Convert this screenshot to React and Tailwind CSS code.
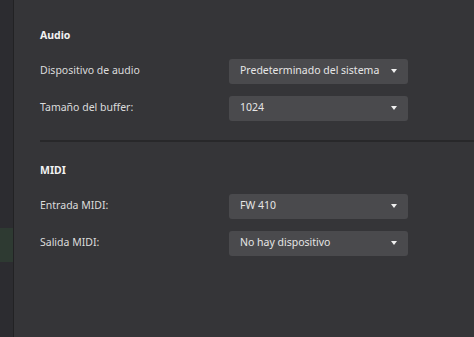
import React from "react";

function Select({ value }) {
  return (
    <div className="flex h-[25px] w-[179px] items-center justify-between rounded-[3px] bg-[#4a4a4d] pl-[11px] pr-[11px] text-[#e6e6e6]">
      <span className="whitespace-nowrap">{value}</span>
      <svg width="6" height="4" viewBox="0 0 6 4"><path d="M0 0 L6 0 L3 4 Z" fill="#f0f0f0" /></svg>
    </div>
  );
}

function Row({ label, value }) {
  return (
    <div className="flex h-[25px] items-center">
      <div className="w-[189px] whitespace-nowrap text-[#dcdcdc]">{label}</div>
      <Select value={value} />
    </div>
  );
}

export default function App() {
  return (
    <div className="flex h-[337px] w-[474px] overflow-hidden bg-[#353538] text-[10.5px]" style={{ fontFamily: '"Noto Sans", "Open Sans", sans-serif' }}>
      <div className="flex w-[14px] flex-col border-r border-[#222224] bg-[#2c2c30]">
        <div className="h-[228px]" />
        <div className="h-[34px] bg-[#2e3a32]" />
      </div>
      <div className="flex flex-1 flex-col pl-[26px]">
        <div className="pt-[28px] font-bold text-[#f2f2f2]">Audio</div>
        <div className="mt-[15px] flex flex-col gap-[12px]">
          <Row label="Dispositivo de audio" value="Predeterminado del sistema" />
          <Row label="Tamaño del buffer:" value="1024" />
        </div>
        <div className="mt-[19px] h-[2px] bg-[#28282a]" />
        <div className="mt-[21px] font-bold text-[#f2f2f2]">MIDI</div>
        <div className="mt-[15px] flex flex-col gap-[12px]">
          <Row label="Entrada MIDI:" value="FW 410" />
          <Row label="Salida MIDI:" value="No hay dispositivo" />
        </div>
      </div>
    </div>
  );
}
